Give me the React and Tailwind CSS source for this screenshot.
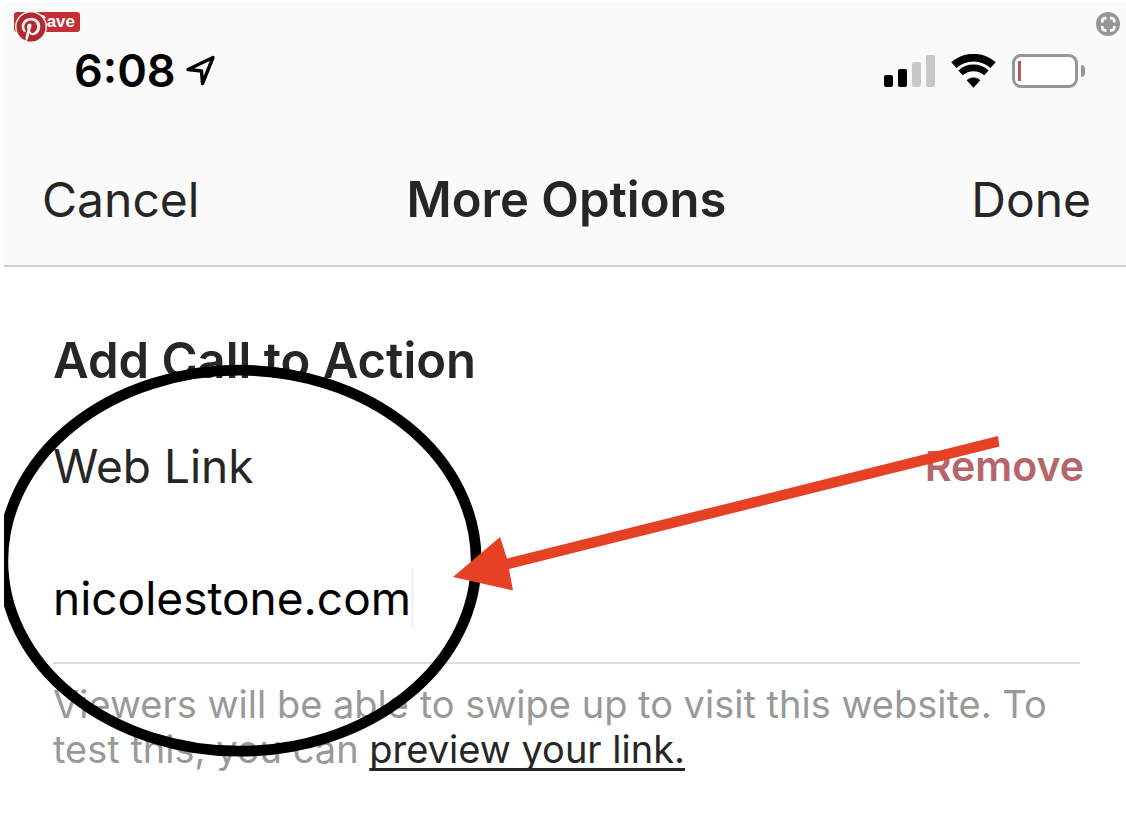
import React, { useState } from 'react';
import { FaPinterest } from 'react-icons/fa';

const SIGNAL_BARS = [
  { height: 'h-3', color: 'bg-black' },
  { height: 'h-[18px]', color: 'bg-black' },
  { height: 'h-[25px]', color: 'bg-[#c8c8c8]' },
  { height: 'h-8', color: 'bg-[#c8c8c8]' },
];

function LocationArrow() {
  return (
    <svg viewBox="0 0 32 32" className="w-8 h-8" fill="none" stroke="#000" strokeWidth="3.4" strokeLinejoin="round">
      <path d="M29 2.5 L4 14.5 L17.5 16 L18.5 28.5 Z" />
    </svg>
  );
}

function WifiIcon() {
  return (
    <svg viewBox="0 0 45 34" className="w-[45px] h-[34px]" fill="none" stroke="#000">
      <path d="M2.9 11.2 A29.3 29.3 0 0 1 42.1 11.2" strokeWidth="7.8" />
      <path d="M9.6 18.9 A19 19 0 0 1 35.4 18.9" strokeWidth="6.6" />
      <path d="M22.5 33.4 L16 26.2 A9.6 9.6 0 0 1 29 26.2 Z" fill="#000" strokeWidth="0.6" />
    </svg>
  );
}

function Battery() {
  return (
    <div className="flex items-center gap-[3px]">
      <div className="w-[66px] h-[34px] border-3 border-[#969696] rounded-[9px] bg-white p-1 pl-[3px]">
        <div className="w-[3px] h-5 bg-[#b5595d]" />
      </div>
      <div className="w-1 h-3 bg-[#969696] rounded-r-full" />
    </div>
  );
}

function StatusBar() {
  return (
    <div className="flex items-center justify-between pl-[70px] pr-[41px]">
      <div className="flex items-center gap-2">
        <span className="text-[45px] leading-12 font-semibold text-black">6:08</span>
        <LocationArrow />
      </div>
      <div className="flex items-center gap-4">
        <div className="flex items-end gap-[5px] h-8">
          {SIGNAL_BARS.map((bar) => (
            <div key={bar.height} className={`w-[9px] rounded-[2px] ${bar.height} ${bar.color}`} />
          ))}
        </div>
        <WifiIcon />
        <Battery />
      </div>
    </div>
  );
}

function SaveButton() {
  return (
    <button
      aria-label="Save"
      className="absolute left-[10px] top-[10px] w-[66px] h-5 pr-[5px] rounded-[3px] bg-[#c22f37] text-right text-[17px] leading-5 font-bold text-white font-['Liberation_Sans',sans-serif]"
    >
      Save
      <span className="absolute left-px top-[-1px] rounded-full bg-[#fbeeee] p-px">
        <FaPinterest className="w-[30px] h-[30px] text-[#ad2a31]" />
      </span>
    </button>
  );
}

function VisualSearchButton() {
  return (
    <button aria-label="Visual search" className="absolute right-[6px] top-[10px] w-6 h-6 rounded-full bg-[#969696]">
      <svg viewBox="0 0 24 24" className="w-6 h-6" fill="none" stroke="#fff" strokeWidth="2.8">
        <path d="M6.2 10.5 V9.2 A3 3 0 0 1 9.2 6.2 H10.5" />
        <path d="M14 6.2 H15.3 A3 3 0 0 1 18.3 9.2 V10.5" />
        <path d="M18.3 14 V15.3 A3 3 0 0 1 15.3 18.3 H14" />
        <path d="M10.5 18.3 H9.2 A3 3 0 0 1 6.2 15.3 V14" />
      </svg>
    </button>
  );
}

// Hand-drawn style circle and arrow laid over the form
function Annotations() {
  return (
    <svg className="absolute inset-0 w-full h-full pointer-events-none">
      <ellipse cx="235.5" cy="558.7" rx="236.7" ry="190.5" fill="none" stroke="#000" strokeWidth="10.8" />
      <path d="M994 434 L995.5 444.5 L505 567 L509 588.5 L449 575 L496 535 L503 556.5 Z" fill="#e64025" />
    </svg>
  );
}

export default function App() {
  const [link, setLink] = useState('nicolestone.com');

  return (
    <div className="min-h-screen bg-white pl-1 pt-[2px] font-[Inter,sans-serif] text-[#262626]">
      <div className="relative overflow-hidden">
        {/* Header */}
        <header className="bg-[#fafafa] border-b-2 border-[#cfcfcf] pt-[45px] pb-[35px]">
          <StatusBar />
          <nav className="grid grid-cols-[1fr_auto_1fr] items-center mt-[75px] pl-[38px] pr-[35px] text-[48px] leading-[60px]">
            <button className="justify-self-start">Cancel</button>
            <h1 className="text-[49px] font-semibold">More Options</h1>
            <button className="justify-self-end">Done</button>
          </nav>
        </header>

        {/* Form */}
        <main className="pt-[64px] pl-[49px] pr-[46px] pb-12">
          <h2 className="text-[49px] leading-[60px] font-semibold">Add Call to Action</h2>

          <div className="flex items-center justify-between mt-[45px] -mr-1">
            <label htmlFor="web-link" className="text-[46px] leading-[60px]">Web Link</label>
            <button className="text-[41px] leading-[60px] font-semibold text-[#b5656b]">Remove</button>
          </div>

          <div className="flex items-center mt-[72px] pb-[34px] border-b-2 border-[#dbdbdb]">
            <input
              id="web-link"
              type="text"
              value={link}
              onChange={(e) => setLink(e.target.value)}
              className="field-sizing-content h-[60px] text-[46px] text-black outline-none"
            />
            <span className="w-[3px] h-[60px] bg-[#f1f4fc]" />
          </div>

          <p className="mt-[18px] text-[38px] leading-[45px] text-[#999999]">
            Viewers will be able to swipe up to visit this website. To test this, you can{' '}
            <a
              href="#preview"
              className="text-[#262626] underline decoration-3 underline-offset-[5px] [text-decoration-skip-ink:none]"
            >
              preview your link.
            </a>
          </p>
        </main>

        <Annotations />
        <SaveButton />
        <VisualSearchButton />
      </div>
    </div>
  );
}
